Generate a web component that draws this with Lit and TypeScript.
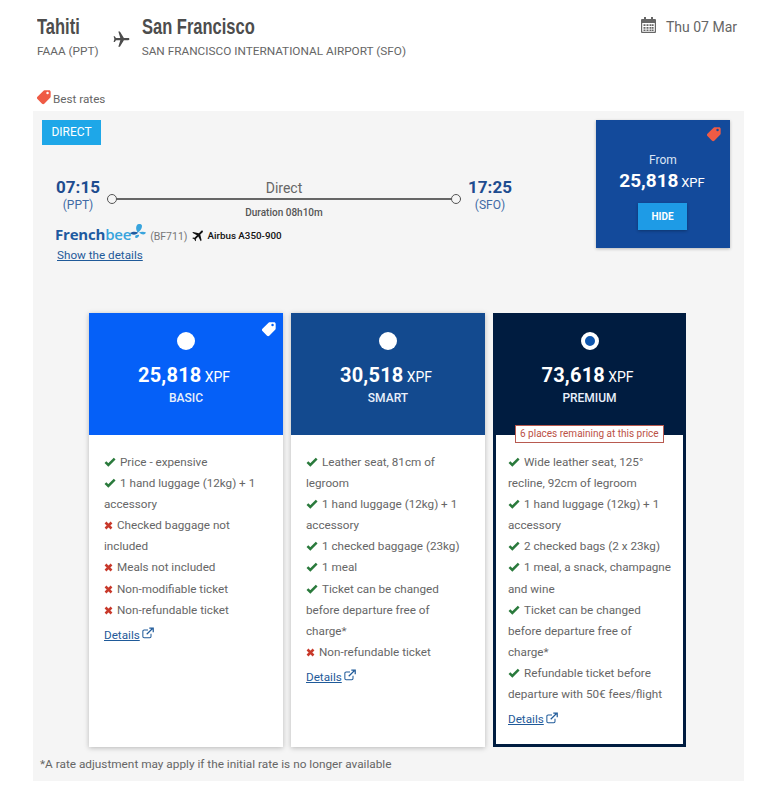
import { LitElement, html, css } from "lit";
import { customElement } from "lit/decorators.js";

const plane = "M21 16v-2l-8-5V3.5c0-.83-.67-1.5-1.5-1.5S10 2.67 10 3.5V9l-8 5v2l8-2.5V19l-2 1.5V22l3.5-1 3.5 1v-1.5L13 19v-5.5l8 2.5z";
const tagPath = "M9.5 1.5h5.2c.9 0 1.8.8 1.8 1.8v5.2c0 .6-.2 1-.6 1.4l-6.6 6.6c-.7.7-1.8.7-2.5 0l-5.2-5.2c-.7-.7-.7-1.8 0-2.5l6.6-6.6c.4-.4 .8-.7 1.3-.7zM13 3.2a1.4 1.4 0 1 0 0 2.8 1.4 1.4 0 0 0 0-2.8z";

const tag = (cls: string) => html`<svg class=${cls} viewBox="0 0 18 18"><path fill-rule="evenodd" fill="currentColor" d=${tagPath}/></svg>`;
const check = html`<svg class="mark ok" viewBox="0 0 14 12"><path d="M1.5 6.200 5 9.600 12.600 2" fill="none" stroke="currentColor" stroke-width="3"/></svg>`;
const cross = html`<svg class="mark no" viewBox="0 0 12 12"><path d="M2 2 10 10M10 2 2 10" fill="none" stroke="currentColor" stroke-width="3.400"/></svg>`;
const ext = html`<svg class="ext" viewBox="0 0 14 13"><path d="M10.5 7.5v3a1.5 1.5 0 0 1-1.5 1.5H2.5A1.5 1.5 0 0 1 1 10.5V4.5A1.5 1.5 0 0 1 2.500 3H7" fill="none" stroke="currentColor" stroke-width="1.200"/><path d="M5.500 8 12 1.500M8.500 .9h4.600v4.600" fill="none" stroke="currentColor" stroke-width="1.400"/></svg>`;

interface Feature { ok: boolean; text: string; }
interface Fare {
  cls: string; price: string; name: string; sel?: boolean; tag?: boolean; badge?: string; features: Feature[];
}

const fares: Fare[] = [
  {
    cls: "basic", price: "25,818", name: "BASIC", tag: true,
    features: [
      { ok: true, text: "Price - expensive" },
      { ok: true, text: "1 hand luggage (12kg) + 1 accessory" },
      { ok: false, text: "Checked baggage not included" },
      { ok: false, text: "Meals not included" },
      { ok: false, text: "Non-modifiable ticket" },
      { ok: false, text: "Non-refundable ticket" },
    ],
  },
  {
    cls: "smart", price: "30,518", name: "SMART",
    features: [
      { ok: true, text: "Leather seat, 81cm of legroom" },
      { ok: true, text: "1 hand luggage (12kg) + 1 accessory" },
      { ok: true, text: "1 checked baggage (23kg)" },
      { ok: true, text: "1 meal" },
      { ok: true, text: "Ticket can be changed before departure free of charge*" },
      { ok: false, text: "Non-refundable ticket" },
    ],
  },
  {
    cls: "premium", price: "73,618", name: "PREMIUM", sel: true, badge: "6 places remaining at this price",
    features: [
      { ok: true, text: "Wide leather seat, 125° recline, 92cm of legroom" },
      { ok: true, text: "1 hand luggage (12kg) + 1 accessory" },
      { ok: true, text: "2 checked bags (2 x 23kg)" },
      { ok: true, text: "1 meal, a snack, champagne and wine" },
      { ok: true, text: "Ticket can be changed before departure free of charge*" },
      { ok: true, text: "Refundable ticket before departure with 50€ fees/flight" },
    ],
  },
];

@customElement("app-root")
export class AppRoot extends LitElement {
  static styles = css`
    :host { display: block; height: 787px; background: #fff; font-family: Roboto, "Liberation Sans", sans-serif; color: #666; font-size: 11.7px; overflow: hidden; }
    a { color: #1f5a99; text-decoration: underline; }
    .top { display: flex; align-items: flex-start; padding: 15px 31px 0 37px; height: 69px; box-sizing: border-box; }
    .place { display: flex; flex-direction: column; align-items: flex-start; }
    .city { font-family: "Liberation Sans", sans-serif; font-weight: 700; font-size: 22px; line-height: 24px; color: #4d4d4d; transform: scaleX(.75); transform-origin: left center; white-space: nowrap; }
    .air { font-size: 11.800px; line-height: 14px; margin-top: 5px; color: #666; white-space: nowrap; }
    .top-plane { width: 19px; height: 19px; margin: 15px 11px 0 13px; color: #4d4d4d; transform: rotate(90deg); flex: none; }
    .date { margin-left: auto; display: flex; align-items: center; gap: 10px; font-size: 14px; color: #666; line-height: 24px; }
    .cal { width: 15px; height: 16px; color: #666; margin-top: -4px; }
    .best { display: flex; align-items: flex-end; height: 42px; padding-left: 36px; box-sizing: border-box; }
    .best span { line-height: 14px; margin-left: 1px; margin-bottom: 5px; }
    .best-tag { width: 16px; height: 16px; color: #ef5b45; margin-bottom: 6px; }
    .panel { margin-left: 33px; width: 711px; height: 670px; background: #f5f5f5; padding: 9px 14px 0 9px; box-sizing: border-box; }
    .flight { display: flex; justify-content: space-between; align-items: flex-start; height: 193px; }
    .info { width: 520px; }
    .direct { display: inline-block; background: #1ea7e8; color: #fff; width: 59px; height: 25px; line-height: 25px; text-align: center; font-size: 12px; }
    .route { display: flex; margin: 32px 0 0 14px; align-items: flex-start; }
    .time { display: flex; flex-direction: column; align-items: center; width: 44px; }
    .time b { color: #1e4c8f; font-size: 17px; line-height: 20px; font-weight: 700; }
    .time span { color: #3f6aa5; font-size: 12px; line-height: 14px; margin-top: 1px; }
    .track { width: 354px; margin: 0 7px; display: flex; flex-direction: column; align-items: center; }
    .track .label { font-size: 14px; line-height: 16px; color: #666; margin-top: 3px; }
    .line { width: 100%; height: 2px; background: #666; margin-top: 2px; position: relative; }
    .line i { position: absolute; top: -4.500px; width: 8px; height: 8px; border: 1.500px solid #555; border-radius: 50%; background: #f5f5f5; box-sizing: content-box; }
    .line i:first-child { left: 0; }
    .line i:last-child { right: 0; }
    .dur { font-size: 10px; line-height: 12px; font-weight: 500; margin-top: 7px; color: #555; }
    .carrier { display: flex; align-items: center; margin: 5px 0 0 13px; height: 20px; }
    .logo { font-family: "Open Sans", Roboto, sans-serif; font-weight: 700; font-size: 15px; letter-spacing: -.2px; color: #1e5aa0; line-height: 20px; }
    .logo em { font-style: normal; color: #38a4dd; font-weight: 600; }
    .fly { width: 16px; height: 16px; margin: -5px 0 0 -1px; flex: none; }
    .code { font-size: 10.500px; color: #777; margin: 4px 0 0 4px; }
    .jet { width: 15px; height: 15px; color: #111; margin: 3px 0 0 4px; transform: rotate(45deg); flex: none; }
    .model { font-size: 9.800px; font-weight: 500; color: #111; margin: 3px 0 0 1px; }
    .details { display: block; margin: 3px 0 0 15px; line-height: 16px; }
    .price { width: 134px; height: 128px; background: #134a9b; color: #fff; position: relative; box-shadow: 0 1px 3px rgba(0,0,0,.25); display: flex; flex-direction: column; align-items: center; padding-top: 33px; box-sizing: border-box; }
    .price .from { font-size: 12px; line-height: 14px; color: #dbe6f5; }
    .amount { font-size: 19px; font-weight: 700; line-height: 22px; margin-top: 3px; padding-right: 2px; white-space: nowrap; }
    .amount small { font-size: 13px; font-weight: 400; margin-left: -2px; }
    .hide { margin: 9px 1px 0 0; width: 49px; height: 27px; line-height: 27px; background: #1e9be6; color: #fff; text-align: center; font-size: 10px; font-weight: 700; box-shadow: 0 1px 3px rgba(0,0,0,.3); }
    .corner { position: absolute; top: 6px; right: 8px; width: 16px; height: 16px; color: #ef5b45; }
    .cards { display: flex; gap: 8px; margin-left: 47px; }
    .card { width: 194px; height: 434px; background: #fff; box-shadow: 0 1px 5px rgba(0,0,0,.25); display: flex; flex-direction: column; position: relative; box-sizing: border-box; }
    .card.premium { width: 193px; box-shadow: none; }
    .head { height: 122px; color: #fff; display: flex; flex-direction: column; align-items: center; padding-top: 19px; box-sizing: border-box; position: relative; flex: none; }
    .basic .head { background: #0560f8; }
    .smart .head { background: #134a8f; }
    .premium .head { background: #001c40; }
    .radio { width: 18px; height: 18px; border-radius: 50%; background: #fff; box-sizing: border-box; }
    .radio.sel { border: 4px solid #fff; background: #0f56ad; }
    .fare { font-size: 20px; font-weight: 700; line-height: 24px; margin-top: 13px; padding-right: 4px; letter-spacing: .2px; white-space: nowrap; }
    .fare small { font-size: 14px; font-weight: 400; letter-spacing: 0; margin-left: -2px; }
    .name { font-size: 12px; font-weight: 500; line-height: 14px; margin-top: 2px; color: #e8f0fb; }
    .head .corner { top: 8px; right: 6px; color: #fff; width: 16px; height: 16px; }
    .body { flex: 1; padding: 17px 15px 0; box-sizing: border-box; position: relative; }
    .premium .body { border: solid #001c40; border-width: 0 3px 3px; padding: 17px 10px 0 12px; }
    .badge { position: absolute; top: -10px; left: 19px; height: 18px; line-height: 16px; padding: 0 4px; border: 1px solid #b85a50; background: #fff; color: #bb5146; font-size: 10px; white-space: nowrap; box-sizing: border-box; }
    ul { list-style: none; margin: 0; padding: 0; line-height: 21.100px; font-size: 11.7px; color: #666; }
    .mark { display: inline-block; vertical-align: -1px; }
    .mark.ok { width: 12px; height: 10px; color: #2a7a3c; margin-right: 4px; }
    .mark.no { width: 9px; height: 9px; color: #c8392b; margin-right: 4px; }
    .more { display: inline-flex; align-items: center; gap: 2px; margin-top: 6px; line-height: 16px; }
    .ext { width: 12px; height: 12px; color: #1f5a99; margin-top: -3px; }
    .note { margin: 10px 0 0 -2px; font-size: 11.800px; line-height: 14px; color: #666; }
  `;

  private renderFare(f: Fare) {
    return html`<div class="card ${f.cls}">
      <div class="head">
        ${f.tag ? tag("corner") : ""}
        <div class="radio ${f.sel ? "sel" : ""}"></div>
        <div class="fare">${f.price} <small>XPF</small></div>
        <div class="name">${f.name}</div>
      </div>
      <div class="body">
        ${f.badge ? html`<div class="badge">${f.badge}</div>` : ""}
        <ul>${f.features.map((x) => html`<li>${x.ok ? check : cross}${x.text}</li>`)}</ul>
        <a class="more" href="#"><span>Details</span>${ext}</a>
      </div>
    </div>`;
  }

  render() {
    return html`
      <div class="top">
        <div class="place"><div class="city">Tahiti</div><div class="air">FAAA (PPT)</div></div>
        <svg class="top-plane" viewBox="0 0 24 24"><path fill="currentColor" d=${plane}/></svg>
        <div class="place"><div class="city">San Francisco</div><div class="air">SAN FRANCISCO INTERNATIONAL AIRPORT (SFO)</div></div>
        <div class="date">
          <svg class="cal" viewBox="0 0 15 16"><path fill="currentColor" fill-rule="evenodd" d="M3 0h2v2h5V0h2v2h2a1 1 0 0 1 1 1v12a1 1 0 0 1-1 1H1a1 1 0 0 1-1-1V3a1 1 0 0 1 1-1h2zM1.200 6v8.800h12.600V6zM2.500 7.200h2v1.800h-2zM5.500 7.200h2v1.800h-2zM8.500 7.200h2v1.800h-2zM11 7.200h1.600v1.800H11zM2.500 10h2v1.800h-2zM5.500 10h2v1.800h-2zM8.500 10h2v1.800h-2zM11 10h1.600v1.800H11zM2.500 12.500h2v1.500h-2zM5.500 12.500h2v1.500h-2zM8.500 12.500h2v1.500h-2zM11 12.500h1.600v1.500H11z"/></svg>
          <span>Thu 07 Mar</span>
        </div>
      </div>
      <div class="best">${tag("best-tag")}<span>Best rates</span></div>
      <div class="panel">
        <div class="flight">
          <div class="info">
            <span class="direct">DIRECT</span>
            <div class="route">
              <div class="time"><b>07:15</b><span>(PPT)</span></div>
              <div class="track">
                <div class="label">Direct</div>
                <div class="line"><i></i><i></i></div>
                <div class="dur">Duration 08h10m</div>
              </div>
              <div class="time"><b>17:25</b><span>(SFO)</span></div>
            </div>
            <div class="carrier">
              <span class="logo">French<em>bee</em></span>
              <svg class="fly" viewBox="0 0 16 16"><path fill="#38a4dd" d="M7 1c1-1.300 5-1.300 5 1 0 3-2 5-4 6.500C6 7 5.500 3 7 1z"/><path fill="#1e5aa0" d="M0 9c3-2 6-1.500 8-.5-1 2.500-6 3-8 .5z"/><path fill="#38a4dd" d="M9 8.500c2-1 5-1 7 0-1 2.500-4 2.500-7 0zM5.500 11.500c1-.5 3-1 3.500-.5.500 1.500-1.500 3-3 3-1 0-1-1.500-.5-2.500z"/></svg>
              <span class="code">(BF711)</span>
              <svg class="jet" viewBox="0 0 24 24"><path fill="currentColor" d=${plane}/></svg>
              <span class="model">Airbus A350-900</span>
            </div>
            <a class="details" href="#">Show the details</a>
          </div>
          <div class="price">
            ${tag("corner")}
            <div class="from">From</div>
            <div class="amount">25,818 <small>XPF</small></div>
            <div class="hide">HIDE</div>
          </div>
        </div>
        <div class="cards">${fares.map((f) => this.renderFare(f))}</div>
        <div class="note">*A rate adjustment may apply if the initial rate is no longer available</div>
      </div>
    `;
  }
}
